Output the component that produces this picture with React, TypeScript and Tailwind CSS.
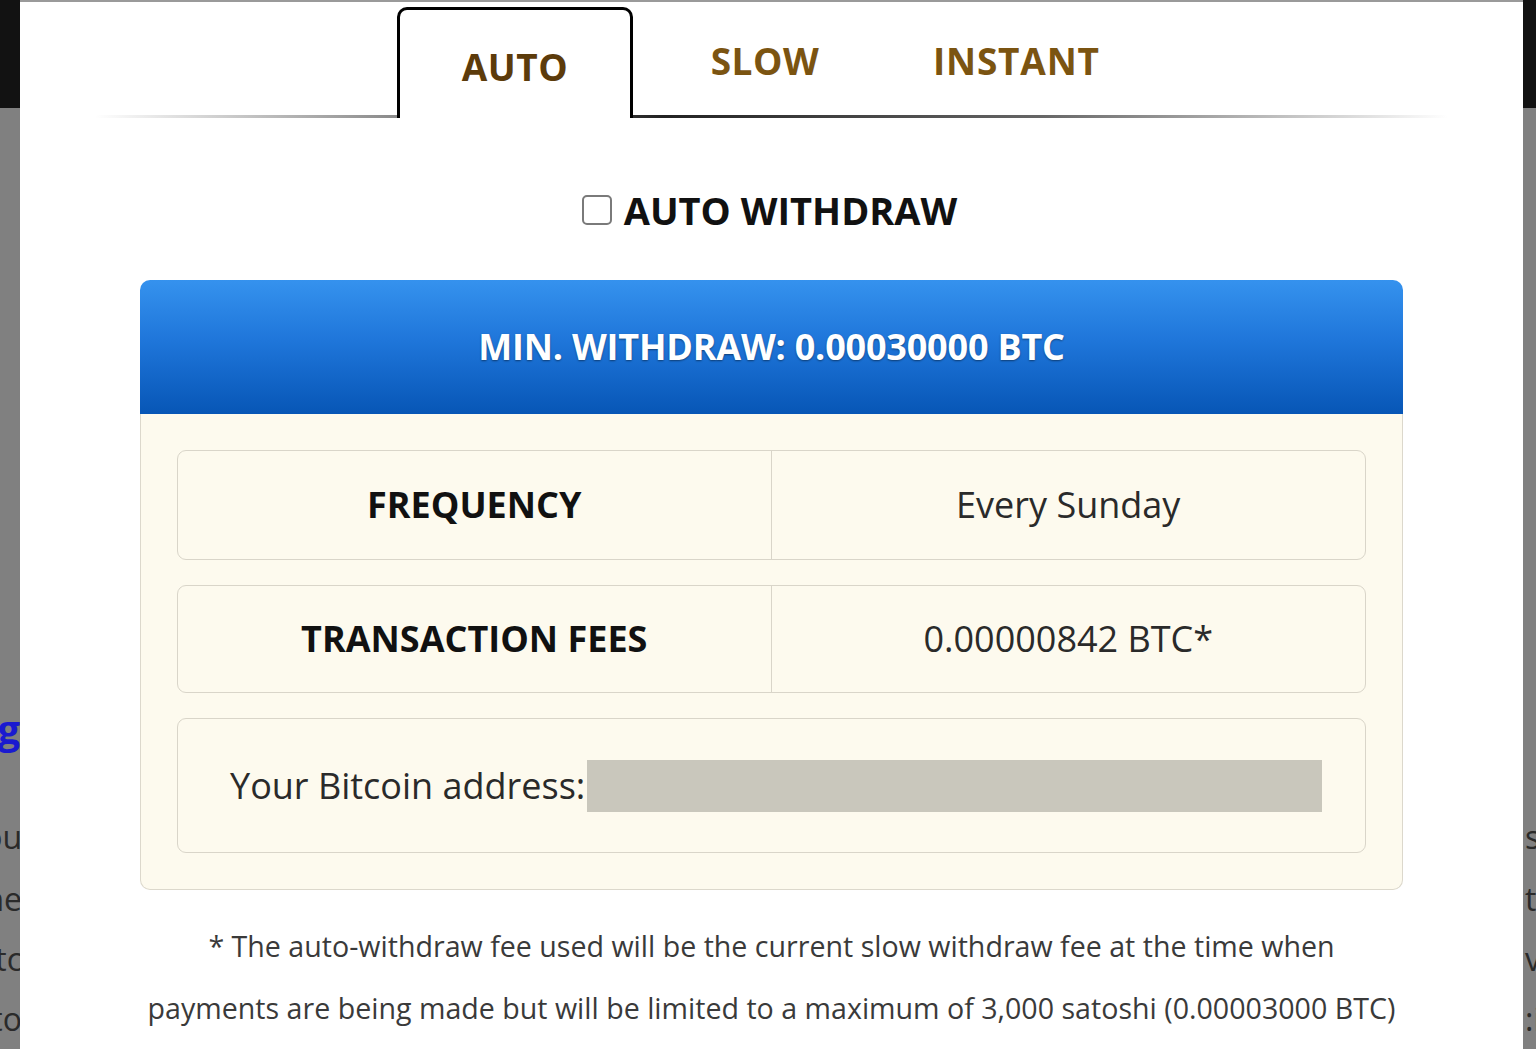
import React, { useState } from 'react';

const tabs = ['AUTO', 'SLOW', 'INSTANT'] as const;
type Tab = (typeof tabs)[number];

export default function App() {
  const [tab, setTab] = useState<Tab>('AUTO');
  const [autoWithdraw, setAutoWithdraw] = useState(false);

  return (
    <div className="flex h-[1049px] w-full overflow-hidden bg-[#7f7f7f] font-['Open_Sans',sans-serif]">
      {/* page behind the modal, dimmed */}
      <div aria-hidden className="flex w-[20px] shrink-0 flex-col overflow-hidden">
        <div className="h-[108px] bg-[#121212]" />
        <div className="relative flex-1 bg-[#808080]">
          <div className="absolute right-0 top-[601px] whitespace-nowrap text-right text-[40px] font-bold leading-none text-[#1a1ad0]">Sig</div>
          <div className="absolute right-[-2px] top-[713px] whitespace-nowrap text-right text-[32px] leading-none text-[#2a2a2a]">you</div>
          <div className="absolute right-[-2px] top-[775px] whitespace-nowrap text-right text-[32px] leading-none text-[#2a2a2a]">the</div>
          <div className="absolute right-[-2px] top-[835px] whitespace-nowrap text-right text-[32px] leading-none text-[#2a2a2a]">etc</div>
          <div className="absolute right-[-2px] top-[895px] whitespace-nowrap text-right text-[32px] leading-none text-[#2a2a2a]">to</div>
        </div>
      </div>

      {/* modal */}
      <div className="flex w-[1503px] shrink-0 flex-col border-t-2 border-[#9a9a9a] bg-white">
        {/* tab bar */}
        <div className="relative mx-[75px] mt-[5px] h-[111px]">
          <div className="absolute bottom-0 left-0 right-0 h-[3px] bg-[linear-gradient(to_right,rgba(40,40,40,0)_0%,#222_42%,#666_70%,rgba(40,40,40,0)_100%)]" />
          <div className="relative flex h-full items-end">
            <button
              onClick={() => setTab('AUTO')}
              className={`relative z-10 ml-[302px] flex h-[111px] w-[236px] items-center justify-center rounded-t-[10px] pt-[6px] text-[37px] font-bold tracking-[0.5px] ${
                tab === 'AUTO' ? 'border-[3px] border-b-0 border-black bg-white text-[#5c3b0b]' : 'text-[#7b5411]'
              }`}
            >
              AUTO
            </button>
            <button
              onClick={() => setTab('SLOW')}
              className={`flex h-[111px] w-[264px] items-center justify-center pb-[4px] text-[37px] font-bold tracking-[0.5px] ${
                tab === 'SLOW' ? 'text-[#5c3b0b]' : 'text-[#7b5411]'
              }`}
            >
              SLOW
            </button>
            <button
              onClick={() => setTab('INSTANT')}
              className={`ml-[36px] flex h-[111px] items-center justify-center pb-[4px] text-[37px] font-bold tracking-[0.8px] ${
                tab === 'INSTANT' ? 'text-[#5c3b0b]' : 'text-[#7b5411]'
              }`}
            >
              INSTANT
            </button>
          </div>
        </div>

        {/* auto withdraw toggle */}
        <label className="mt-[73px] flex cursor-pointer items-center justify-center gap-[12px] pr-[4px]">
          <input
            type="checkbox"
            checked={autoWithdraw}
            onChange={(e) => setAutoWithdraw(e.target.checked)}
            className="h-[30px] w-[30px] appearance-none rounded-[5px] border-2 border-[#7a7a7a] bg-white checked:bg-[#2f7fe0]"
          />
          <span className="text-[38px] font-bold leading-none text-[#111]">AUTO WITHDRAW</span>
        </label>

        {/* withdraw panel */}
        <div className="mx-[120px] mt-[51px]">
          <div className="flex h-[134px] items-center justify-center rounded-t-[10px] bg-[linear-gradient(to_bottom,#3592ee_0%,#1f76da_45%,#0756b6_100%)]">
            <span className="text-[36px] font-bold tracking-[-0.2px] text-white [text-shadow:0_1px_2px_rgba(0,0,0,0.45)]">
              MIN. WITHDRAW: 0.00030000 BTC
            </span>
          </div>
          <div className="flex flex-col gap-[25px] rounded-b-[10px] border border-t-0 border-[#dcd8cc] bg-[#fdfaee] px-[36px] pb-[36px] pt-[36px]">
            <div className="grid h-[110px] grid-cols-2 rounded-[9px] border-[1.5px] border-[#d9d5c9]">
              <div className="flex items-center justify-center border-r-[1.5px] border-[#d9d5c9] text-[36px] font-bold text-[#111]">
                FREQUENCY
              </div>
              <div className="flex items-center justify-center text-[36px] text-[#2a2a2a]">Every Sunday</div>
            </div>
            <div className="grid h-[108px] grid-cols-2 rounded-[9px] border-[1.5px] border-[#d9d5c9]">
              <div className="flex items-center justify-center border-r-[1.5px] border-[#d9d5c9] text-[36px] font-bold text-[#111]">
                TRANSACTION FEES
              </div>
              <div className="flex items-center justify-center text-[36px] text-[#2a2a2a]">0.00000842 BTC*</div>
            </div>
            <div className="flex h-[135px] items-center rounded-[9px] border-[1.5px] border-[#d9d5c9] pl-[52px] pr-[43px]">
              <span className="text-[36px] text-[#2a2a2a]">Your Bitcoin address:</span>
              <div className="ml-[2px] h-[52px] flex-1 bg-[#c9c7bc]" />
            </div>
          </div>
        </div>

        {/* fee note */}
        <p className="mx-[110px] mt-[25px] text-center text-[28.6px] leading-[62px] text-[#3a3a3a]">
          * The auto-withdraw fee used will be the current slow withdraw fee at the time when
          <br />
          payments are being made but will be limited to a maximum of 3,000 satoshi (0.00003000 BTC)
        </p>
      </div>

      {/* page behind the modal, right side */}
      <div aria-hidden className="flex flex-1 flex-col overflow-hidden">
        <div className="h-[108px] bg-[#121212]" />
        <div className="relative flex-1 bg-[#808080]">
          <div className="absolute left-[2px] top-[713px] whitespace-nowrap text-[32px] leading-none text-[#2a2a2a]">sat</div>
          <div className="absolute left-[2px] top-[775px] whitespace-nowrap text-[32px] leading-none text-[#2a2a2a]">to</div>
          <div className="absolute left-[2px] top-[835px] whitespace-nowrap text-[32px] leading-none text-[#2a2a2a]">vi</div>
          <div className="absolute left-[2px] top-[895px] whitespace-nowrap text-[32px] leading-none text-[#2a2a2a]">:i</div>
        </div>
      </div>
    </div>
  );
}
